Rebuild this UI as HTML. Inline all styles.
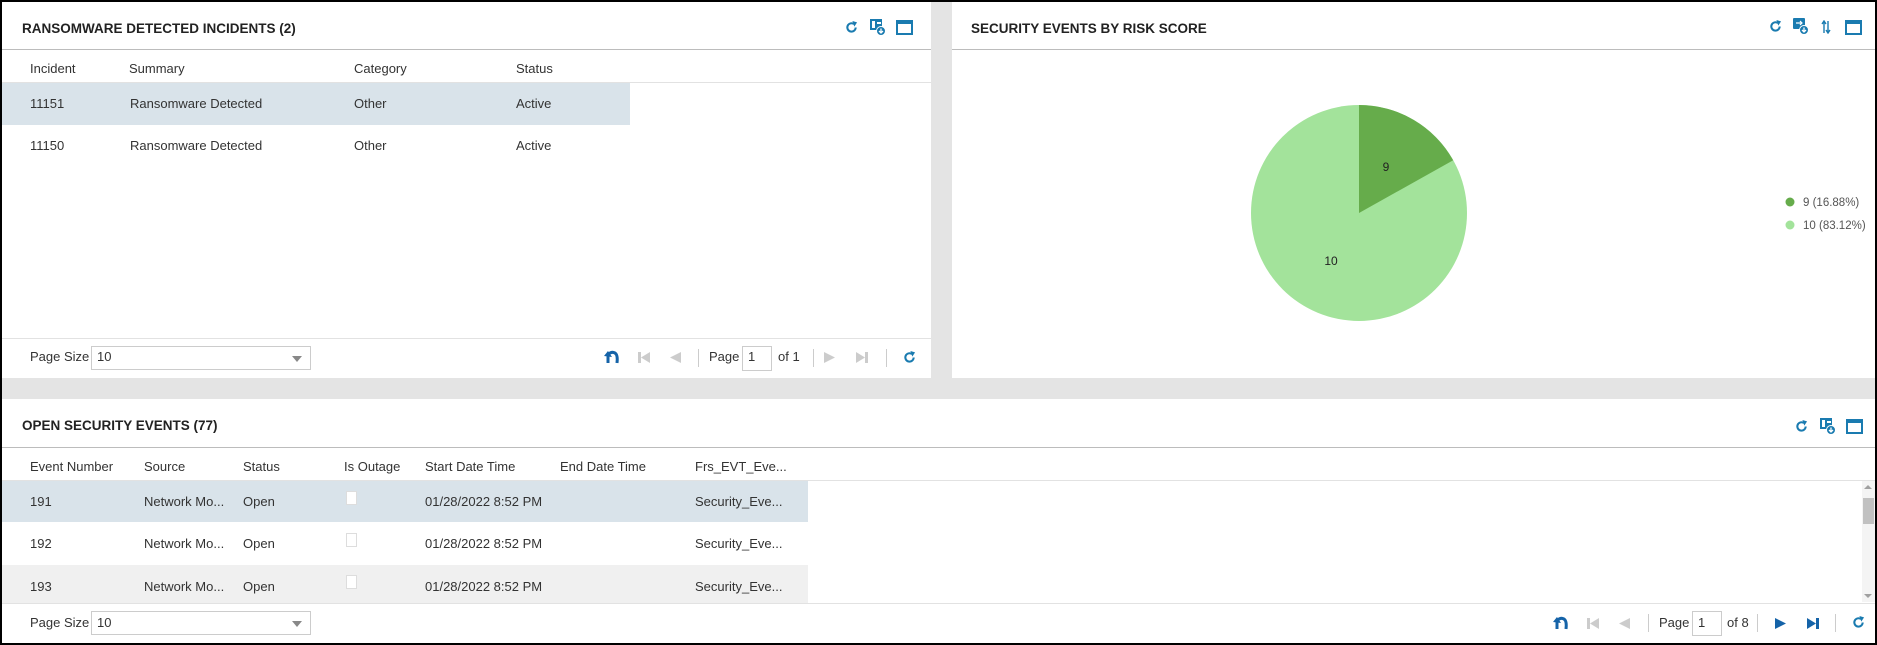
<!DOCTYPE html>
<html><head><meta charset="utf-8"><style>
*{margin:0;padding:0;box-sizing:border-box}
body{width:1877px;height:645px;overflow:hidden;background:#e4e4e4;font-family:"Liberation Sans",sans-serif;font-size:13px;color:#333;position:relative}
.p{position:absolute;background:#fff}
.t{position:absolute;white-space:nowrap;line-height:16px}
.h{font-weight:bold;font-size:13.5px;color:#222}
.ln{position:absolute;height:1px}
.ic{position:absolute}
</style></head><body>
<div style="position:absolute;left:0;top:0;width:1877px;height:645px;border:2px solid #000;border-right-width:2px;z-index:10;pointer-events:none"></div>

<!-- left top panel -->
<div class="p" style="left:0;top:0;width:931px;height:378px">
 <div class="t h" style="left:22px;top:21px">RANSOMWARE DETECTED INCIDENTS (2)</div>
 <div class="ln" style="left:0;top:49px;width:931px;background:#bcbcbc"></div>
 <div class="t" style="left:30px;top:61px">Incident</div>
 <div class="t" style="left:129px;top:61px">Summary</div>
 <div class="t" style="left:354px;top:61px">Category</div>
 <div class="t" style="left:516px;top:61px">Status</div>
 <div class="ln" style="left:0;top:82px;width:931px;background:#e2e2e2"></div>
 <div style="position:absolute;left:2px;top:83px;width:628px;height:42px;background:#d9e3ea"></div>
 <div class="t" style="left:30px;top:96px">11151</div>
 <div class="t" style="left:130px;top:96px">Ransomware Detected</div>
 <div class="t" style="left:354px;top:96px">Other</div>
 <div class="t" style="left:516px;top:96px">Active</div>
 <div class="t" style="left:30px;top:138px">11150</div>
 <div class="t" style="left:130px;top:138px">Ransomware Detected</div>
 <div class="t" style="left:354px;top:138px">Other</div>
 <div class="t" style="left:516px;top:138px">Active</div>
 <div class="ln" style="left:0;top:338px;width:931px;background:#e2e2e2"></div>
 <div class="t" style="left:30px;top:349px">Page Size</div>
 <div style="position:absolute;left:91px;top:346px;width:220px;height:24px;border:1px solid #ccc"></div>
 <div class="t" style="left:97px;top:349px">10</div>
 <div style="position:absolute;left:292px;top:356px;border-left:5px solid transparent;border-right:5px solid transparent;border-top:6px solid #888"></div>
 <svg class="ic" style="left:604px;top:349px" width="16" height="16" viewBox="0 0 16 16"><path d="M4 14 L4 6 Q7 2 11 4 Q14 6 13 14" fill="none" stroke="#1563a8" stroke-width="3"/><path d="M0 7 L4 2 L8 8Z" fill="#1563a8"/></svg>
 <svg class="ic" style="left:638px;top:352px" width="12" height="11"><rect x="0" y="0" width="3" height="11" fill="#ccc"/><path d="M12 0 L3 5.5 L12 11Z" fill="#ccc"/></svg>
 <svg class="ic" style="left:670px;top:352px" width="11" height="11"><path d="M11 0 L0 5.5 L11 11Z" fill="#ccc"/></svg>
 <div class="ln" style="left:698px;top:349px;width:1px;height:18px;background:#ccc"></div>
 <div class="t" style="left:709px;top:349px">Page</div>
 <div style="position:absolute;left:742px;top:346px;width:30px;height:25px;border:1px solid #ccc"></div>
 <div class="t" style="left:748px;top:349px">1</div>
 <div class="t" style="left:778px;top:349px">of 1</div>
 <div class="ln" style="left:813px;top:349px;width:1px;height:18px;background:#ccc"></div>
 <svg class="ic" style="left:824px;top:352px" width="11" height="11"><path d="M0 0 L11 5.5 L0 11Z" fill="#ccc"/></svg>
 <svg class="ic" style="left:856px;top:352px" width="12" height="11"><path d="M0 0 L9 5.5 L0 11Z" fill="#ccc"/><rect x="9" y="0" width="3" height="11" fill="#ccc"/></svg>
 <div class="ln" style="left:886px;top:349px;width:1px;height:18px;background:#ccc"></div>
 <svg class="ic" style="left:903px;top:351px" width="13" height="13" viewBox="0 0 14 14"><path d="M11.5 7 A4.5 4.5 0 1 1 9.5 3.2" fill="none" stroke="#1a7bb0" stroke-width="2.2"/><path d="M8 0 L13 1.5 L10 6Z" fill="#1a7bb0"/></svg>
 <!-- header icons -->
 <svg class="ic" style="left:845px;top:21px" width="13" height="13" viewBox="0 0 14 14"><path d="M11.5 7 A4.5 4.5 0 1 1 9.5 3.2" fill="none" stroke="#1a7bb0" stroke-width="2.2"/><path d="M8 0 L13 1.5 L10 6Z" fill="#1a7bb0"/></svg>
 <svg class="ic" style="left:870px;top:19px" width="16" height="17" viewBox="0 0 16 17"><rect x="0" y="0" width="12" height="11" fill="#1a7bb0"/><rect x="2" y="2" width="3" height="7" fill="#fff"/><rect x="7" y="3" width="4" height="2" fill="#fff"/><circle cx="11" cy="12" r="4.5" fill="#1a7bb0" stroke="#fff" stroke-width="1"/><path d="M11 9.5 V14 M9 12 L11 14 L13 12" stroke="#fff" stroke-width="1.3" fill="none"/></svg>
 <svg class="ic" style="left:896px;top:20px" width="17" height="15"><rect x="1" y="1" width="15" height="13" fill="none" stroke="#1a7bb0" stroke-width="2"/><rect x="1" y="1" width="15" height="3" fill="#1a7bb0"/></svg>
</div>

<!-- right top panel -->
<div class="p" style="left:952px;top:0;width:925px;height:378px">
 <div class="t h" style="left:19px;top:21px">SECURITY EVENTS BY RISK SCORE</div>
 <div class="ln" style="left:0;top:49px;width:925px;background:#bcbcbc"></div>
 <svg class="ic" style="left:817px;top:20px" width="13" height="13" viewBox="0 0 14 14"><path d="M11.5 7 A4.5 4.5 0 1 1 9.5 3.2" fill="none" stroke="#1a7bb0" stroke-width="2.2"/><path d="M8 0 L13 1.5 L10 6Z" fill="#1a7bb0"/></svg>
 <svg class="ic" style="left:841px;top:18px" width="16" height="17" viewBox="0 0 16 17"><rect x="0" y="0" width="12" height="11" rx="1" fill="#1a7bb0"/><path d="M3 5 H9 M7 3 L9 5 L7 7" stroke="#fff" stroke-width="1.2" fill="none"/><circle cx="11" cy="12" r="4.5" fill="#1a7bb0" stroke="#fff" stroke-width="1"/><path d="M11 9.5 V14 M9 12 L11 14 L13 12" stroke="#fff" stroke-width="1.3" fill="none"/></svg>
 <svg class="ic" style="left:869px;top:20px" width="10" height="14"><path d="M3 13 V2 M1 4 L3 1 L5 4" stroke="#1a7bb0" stroke-width="1.4" fill="none"/><path d="M7 1 V12 M5 10 L7 13 L9 10" stroke="#1a7bb0" stroke-width="1.4" fill="none"/></svg>
 <svg class="ic" style="left:893px;top:20px" width="17" height="15"><rect x="1" y="1" width="15" height="13" fill="none" stroke="#1a7bb0" stroke-width="2"/><rect x="1" y="1" width="15" height="3" fill="#1a7bb0"/></svg>
 <svg class="ic" style="left:0;top:0" width="925" height="378">
  <circle cx="407" cy="213" r="108" fill="#a3e39b"/>
  <path d="M407 213 L407 105 A108 108 0 0 1 501.2 160.3 Z" fill="#66ac4b"/>
  <text x="434" y="171" font-family="Liberation Sans" font-size="12" fill="#222" text-anchor="middle">9</text>
  <text x="379" y="265" font-family="Liberation Sans" font-size="12" fill="#222" text-anchor="middle">10</text>
  <circle cx="838" cy="202" r="4.5" fill="#66ac4b"/>
  <circle cx="838" cy="225" r="4.5" fill="#a3e39b"/>
  <text x="851" y="206" font-family="Liberation Sans" font-size="11.5" fill="#555">9 (16.88%)</text>
  <text x="851" y="229" font-family="Liberation Sans" font-size="11.5" fill="#555">10 (83.12%)</text>
 </svg>
</div>

<!-- bottom panel -->
<div class="p" style="left:0;top:399px;width:1877px;height:246px">
 <div class="t h" style="left:22px;top:19px">OPEN SECURITY EVENTS (77)</div>
 <svg class="ic" style="left:1795px;top:21px" width="13" height="13" viewBox="0 0 14 14"><path d="M11.5 7 A4.5 4.5 0 1 1 9.5 3.2" fill="none" stroke="#1a7bb0" stroke-width="2.2"/><path d="M8 0 L13 1.5 L10 6Z" fill="#1a7bb0"/></svg>
 <svg class="ic" style="left:1820px;top:19px" width="16" height="17" viewBox="0 0 16 17"><rect x="0" y="0" width="12" height="11" fill="#1a7bb0"/><rect x="2" y="2" width="3" height="7" fill="#fff"/><rect x="7" y="3" width="4" height="2" fill="#fff"/><circle cx="11" cy="12" r="4.5" fill="#1a7bb0" stroke="#fff" stroke-width="1"/><path d="M11 9.5 V14 M9 12 L11 14 L13 12" stroke="#fff" stroke-width="1.3" fill="none"/></svg>
 <svg class="ic" style="left:1846px;top:20px" width="17" height="15"><rect x="1" y="1" width="15" height="13" fill="none" stroke="#1a7bb0" stroke-width="2"/><rect x="1" y="1" width="15" height="3" fill="#1a7bb0"/></svg>
 <div class="ln" style="left:0;top:48px;width:1877px;background:#bcbcbc"></div>
 <div class="t" style="left:30px;top:60px">Event Number</div>
 <div class="t" style="left:144px;top:60px">Source</div>
 <div class="t" style="left:243px;top:60px">Status</div>
 <div class="t" style="left:344px;top:60px">Is Outage</div>
 <div class="t" style="left:425px;top:60px">Start Date Time</div>
 <div class="t" style="left:560px;top:60px">End Date Time</div>
 <div class="t" style="left:695px;top:60px">Frs_EVT_Eve...</div>
 <div class="ln" style="left:0;top:81px;width:1877px;background:#e2e2e2"></div>
 <div style="position:absolute;left:2px;top:82px;width:806px;height:41px;background:#d9e3ea"></div>
 <div style="position:absolute;left:2px;top:166px;width:806px;height:38px;background:#f0f0f0"></div>
 <div style="position:absolute;left:1862px;top:82px;width:13px;height:121px;background:#f4f4f4"></div>
 <div style="position:absolute;left:1863px;top:99px;width:11px;height:26px;background:#c1c1c1"></div>
 <div style="position:absolute;left:1864px;top:86px;border-left:4px solid transparent;border-right:4px solid transparent;border-bottom:4px solid #a0a0a0"></div>
 <div style="position:absolute;left:1864px;top:195px;border-left:4px solid transparent;border-right:4px solid transparent;border-top:4px solid #a0a0a0"></div>
 <div class="t" style="left:30px;top:95px">191</div><div class="t" style="left:144px;top:95px">Network Mo...</div><div class="t" style="left:243px;top:95px">Open</div>
 <div style="position:absolute;left:346px;top:92px;width:11px;height:14px;background:#fff;border:1px solid #ddd"></div>
 <div class="t" style="left:425px;top:95px">01/28/2022 8:52 PM</div><div class="t" style="left:695px;top:95px">Security_Eve...</div>
 <div class="t" style="left:30px;top:137px">192</div><div class="t" style="left:144px;top:137px">Network Mo...</div><div class="t" style="left:243px;top:137px">Open</div>
 <div style="position:absolute;left:346px;top:134px;width:11px;height:14px;background:#fff;border:1px solid #ddd"></div>
 <div class="t" style="left:425px;top:137px">01/28/2022 8:52 PM</div><div class="t" style="left:695px;top:137px">Security_Eve...</div>
 <div class="t" style="left:30px;top:180px">193</div><div class="t" style="left:144px;top:180px">Network Mo...</div><div class="t" style="left:243px;top:180px">Open</div>
 <div style="position:absolute;left:346px;top:176px;width:11px;height:14px;background:#fff;border:1px solid #ddd"></div>
 <div class="t" style="left:425px;top:180px">01/28/2022 8:52 PM</div><div class="t" style="left:695px;top:180px">Security_Eve...</div>
 <div class="ln" style="left:0;top:204px;width:1877px;background:#e2e2e2"></div>
 <div class="t" style="left:30px;top:216px">Page Size</div>
 <div style="position:absolute;left:91px;top:212px;width:220px;height:24px;border:1px solid #ccc"></div>
 <div class="t" style="left:97px;top:216px">10</div>
 <div style="position:absolute;left:292px;top:222px;border-left:5px solid transparent;border-right:5px solid transparent;border-top:6px solid #888"></div>
 <svg class="ic" style="left:1553px;top:216px" width="16" height="16" viewBox="0 0 16 16"><path d="M4 14 L4 6 Q7 2 11 4 Q14 6 13 14" fill="none" stroke="#1563a8" stroke-width="3"/><path d="M0 7 L4 2 L8 8Z" fill="#1563a8"/></svg>
 <svg class="ic" style="left:1587px;top:219px" width="12" height="11"><rect x="0" y="0" width="3" height="11" fill="#ccc"/><path d="M12 0 L3 5.5 L12 11Z" fill="#ccc"/></svg>
 <svg class="ic" style="left:1619px;top:219px" width="11" height="11"><path d="M11 0 L0 5.5 L11 11Z" fill="#ccc"/></svg>
 <div class="ln" style="left:1648px;top:215px;width:1px;height:18px;background:#ccc"></div>
 <div class="t" style="left:1659px;top:216px">Page</div>
 <div style="position:absolute;left:1692px;top:212px;width:30px;height:25px;border:1px solid #ccc"></div>
 <div class="t" style="left:1698px;top:216px">1</div>
 <div class="t" style="left:1727px;top:216px">of 8</div>
 <div class="ln" style="left:1757px;top:215px;width:1px;height:18px;background:#ccc"></div>
 <svg class="ic" style="left:1775px;top:219px" width="11" height="11"><path d="M0 0 L11 5.5 L0 11Z" fill="#1563a8"/></svg>
 <svg class="ic" style="left:1807px;top:219px" width="12" height="11"><path d="M0 0 L9 5.5 L0 11Z" fill="#1563a8"/><rect x="9" y="0" width="3" height="11" fill="#1563a8"/></svg>
 <div class="ln" style="left:1835px;top:215px;width:1px;height:18px;background:#ccc"></div>
 <svg class="ic" style="left:1852px;top:217px" width="13" height="13" viewBox="0 0 14 14"><path d="M11.5 7 A4.5 4.5 0 1 1 9.5 3.2" fill="none" stroke="#1a7bb0" stroke-width="2.2"/><path d="M8 0 L13 1.5 L10 6Z" fill="#1a7bb0"/></svg>
</div>
</body></html>
